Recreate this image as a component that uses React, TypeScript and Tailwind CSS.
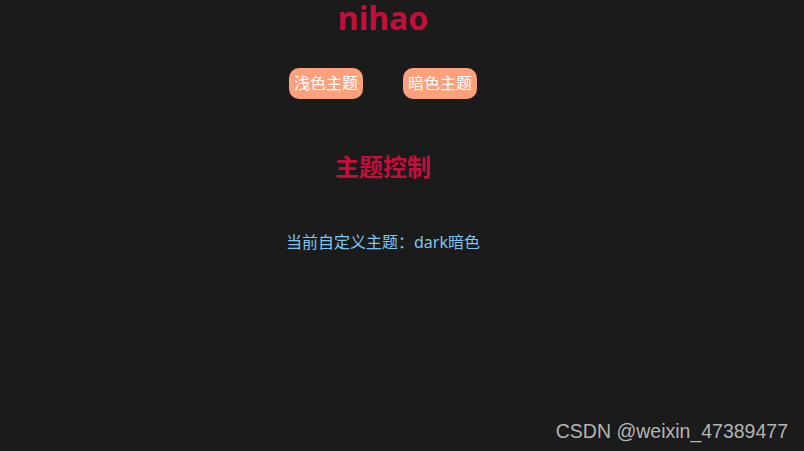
import React from "react";

export default function App() {
  return (
    <div className="relative w-[804px] h-[451px] bg-[#1b1b1b] overflow-hidden" style={{ fontFamily: '"Noto Sans", "Noto Sans CJK SC", sans-serif' }}>
      <div className="w-[766px] flex flex-col items-center">
        <h1 className="text-[32px] font-bold leading-[36px] text-[#c40f3c]">nihao</h1>
        <div className="flex gap-[40px] mt-[32px]">
          <button className="h-[31px] px-[5px] rounded-[10px] bg-[#fea07b] text-white text-[16px] leading-[31px]">浅色主题</button>
          <button className="h-[31px] px-[5px] rounded-[10px] bg-[#fea07b] text-white text-[16px] leading-[31px]">暗色主题</button>
        </div>
        <h2 className="mt-[50px] text-[24px] font-bold leading-[36px] text-[#c40f3c]">主题控制</h2>
        <p className="mt-[45px] text-[16px] leading-[24px] text-[#7cc6f2]">当前自定义主题：dark暗色</p>
      </div>
      <div className="absolute right-[16px] bottom-[8px] text-[19.5px] leading-[24px] text-[#b4b4b4]" style={{ fontFamily: '"Liberation Sans", Arial, sans-serif' }}>CSDN @weixin_47389477</div>
    </div>
  );
}
